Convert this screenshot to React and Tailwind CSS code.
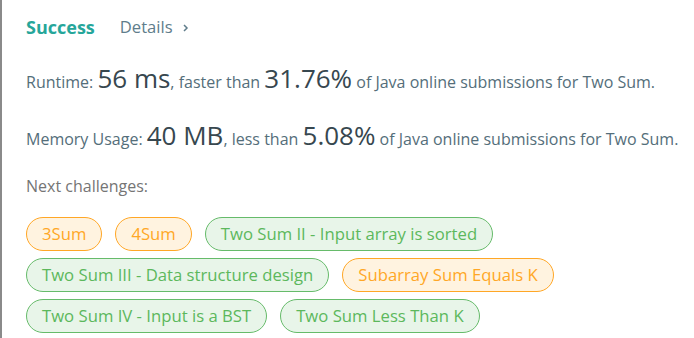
import React from "react";

const challenges = [
  { title: "3Sum", level: "medium" },
  { title: "4Sum", level: "medium" },
  { title: "Two Sum II - Input array is sorted", level: "easy" },
  { title: "Two Sum III - Data structure design", level: "easy" },
  { title: "Subarray Sum Equals K", level: "medium" },
  { title: "Two Sum IV - Input is a BST", level: "easy" },
  { title: "Two Sum Less Than K", level: "easy" },
];

function Stat({ label, value, word, percent }) {
  return (
    <p className="text-[16px] text-[#546e7a] leading-[30px] whitespace-nowrap">
      {label}: <span className="text-[26px] text-[#37474f]">{value}</span>, {word}{" "}
      <span className="text-[26px] text-[#37474f]">{percent}</span> of Java online
      submissions for Two Sum.
    </p>
  );
}

export default function App() {
  return (
    <div
      className="w-[694px] h-[338px] bg-white border-l-2 border-[#8a8a8a] pl-6 overflow-hidden"
      style={{ fontFamily: '"Open Sans", "Noto Sans", sans-serif' }}
    >
      <div className="flex items-center h-[54px]">
        <span className="text-[18px] font-bold text-[#26a69a]">Success</span>
        <span className="ml-[25px] text-[16.6px] text-[#607d8b] flex items-center">
          Details
          <svg width="12" height="12" viewBox="0 0 12 12" className="ml-[7px] mt-[2px]">
            <path d="M4 3l3 3-3 3" fill="none" stroke="#607d8b" strokeWidth="1.5" />
          </svg>
        </span>
      </div>
      <div className="mt-[9px]">
        <Stat label="Runtime" value="56 ms" word="faster than" percent="31.76%" />
      </div>
      <div className="mt-[23px]">
        <Stat label="Memory Usage" value="40 MB" word="less than" percent="5.08%" />
      </div>
      <p className="mt-[20px] text-[16px] leading-[24px] text-[#757575]">Next challenges:</p>
      <div className="mt-[19px] flex flex-wrap gap-x-[13px] gap-y-[7px] w-[580px]">
        {challenges.map((c) => (
          <span
            key={c.title}
            className={
              c.level === "medium"
                ? "h-[34px] px-[15px] rounded-full border border-[#ffa726] bg-[#fff3e0] text-[#ffa726] text-[16.7px] flex items-center"
                : "h-[34px] px-[15px] rounded-full border border-[#66bb6a] bg-[#e8f5e9] text-[#5cb85c] text-[16.7px] flex items-center"
            }
          >
            {c.title}
          </span>
        ))}
      </div>
    </div>
  );
}
